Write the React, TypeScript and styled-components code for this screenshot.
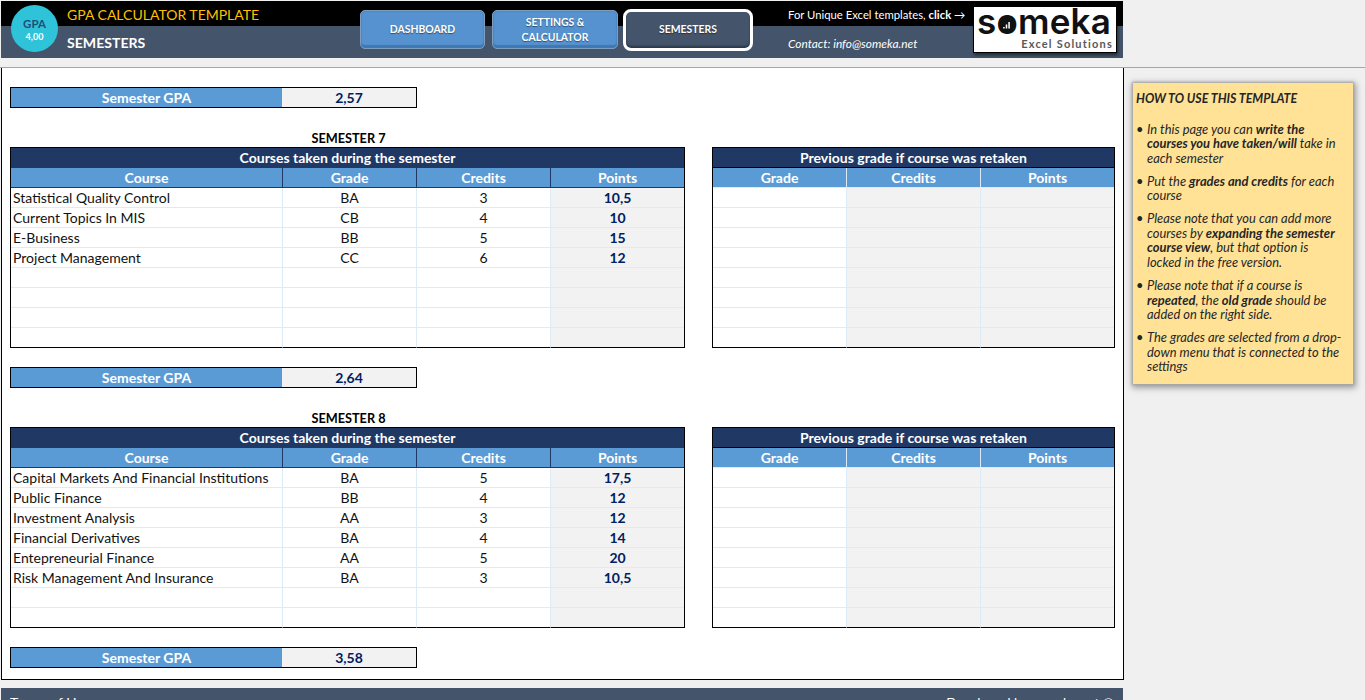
import React from "react";
import styled, { createGlobalStyle } from "styled-components";

const FONT = `Lato, "Open Sans", "Liberation Sans", sans-serif`;

const Global = createGlobalStyle`
  html, body { margin: 0; padding: 0; height: 700px; overflow: hidden; background: #f0f0f0; }
  * { box-sizing: border-box; }
  body { font-family: ${FONT}; color: #111; }
`;

const Page = styled.div`
  width: 1365px;
  height: 700px;
  overflow: hidden;
  padding-top: 1px;
`;

/* ---------- header ---------- */
const Header = styled.header`
  width: 1122px;
  height: 57px;
  margin-left: 1px;
  display: flex;
  background: linear-gradient(#000 0 25px, #44546a 25px 57px);
`;
const Badge = styled.div`
  width: 47px;
  height: 47px;
  margin: 4px 0 0 10px;
  padding-top: 2px;
  flex: none;
  border-radius: 50%;
  background: radial-gradient(circle, #2fc3d9 0 74%, #28a9bd 88%, #19788a 100%);
  display: flex;
  flex-direction: column;
  align-items: center;
  justify-content: center;
`;
const BadgeTitle = styled.span`
  font-size: 11.5px;
  font-weight: 700;
  line-height: 14px;
  color: #1f4e79;
`;
const BadgeValue = styled.span`
  font-size: 9px;
  font-weight: 700;
  line-height: 12px;
  color: #fff;
`;
const TitleBlock = styled.div`
  width: 293px;
  margin-left: 9px;
  flex: none;
  display: flex;
  flex-direction: column;
`;
const AppTitle = styled.div`
  height: 32px;
  padding-top: 4px;
  font-size: 14px;
  line-height: 19px;
  color: #ffc000;
`;
const PageTitle = styled.div`
  font-size: 14.1px;
  font-weight: 700;
  line-height: 19px;
  color: #fff;
`;
const Nav = styled.nav`
  width: 428px;
  flex: none;
  display: flex;
  align-items: center;
  gap: 7px;
`;
const NavButton = styled.div<{ $active?: boolean; $width: number }>`
  width: ${(p) => p.$width}px;
  height: ${(p) => (p.$active ? 42 : 39)}px;
  margin-left: ${(p) => (p.$active ? -2 : 0)}px;
  flex: none;
  display: flex;
  align-items: center;
  justify-content: center;
  text-align: center;
  border-radius: ${(p) => (p.$active ? 8 : 5)}px;
  border: ${(p) => (p.$active ? "3px solid #fff" : "1px solid #7f9dbd")};
  background: ${(p) => (p.$active ? "#44546a" : "#5692cf")};
  box-shadow: ${(p) =>
    p.$active
      ? "inset 0 -2px 2px #2c394b"
      : "inset 0 -3px 1px #3f78b2, inset 0 0 2px #3f78b2"};
  color: #fff;
  font-size: 10.4px;
  font-weight: 700;
  line-height: 15px;
  text-shadow: 0 1px 1px rgba(0, 0, 0, 0.45);
`;
const Contact = styled.div`
  width: 185px;
  flex: none;
  display: flex;
  flex-direction: column;
  justify-content: space-between;
  padding: 6px 0 7px;
  color: #fff;
  font-size: 11.3px;
  line-height: 15px;
`;
const ContactMail = styled.span`
  font-style: italic;
  font-size: 11.9px;
`;
const Logo = styled.div`
  position: relative;
  width: 144px;
  height: 47px;
  margin-top: 5px;
  flex: none;
  background: #fff;
  border: 1px solid #000;
  box-shadow: 1px 2px 3px rgba(0, 0, 0, 0.5);
`;
const LogoName = styled.div`
  height: 31px;
  padding-left: 3px;
  font-family: Inter, "Open Sans", sans-serif;
  font-size: 35px;
  font-weight: 600;
  line-height: 29px;
  letter-spacing: 0.2px;
  color: #111;
`;
const LogoMark = styled.svg`
  position: absolute;
  left: 22px;
  top: 7px;
  width: 21px;
  height: 21px;
`;
const LogoSub = styled.div`
  text-align: right;
  padding-right: 3px;
  font-size: 11px;
  font-weight: 700;
  line-height: 12px;
  letter-spacing: 1.2px;
  color: #595959;
`;

/* ---------- body ---------- */
const Body = styled.div`
  margin-top: 9px;
  border-top: 1px solid #a6a6a6;
  display: flex;
  align-items: flex-start;
`;
const Main = styled.main`
  width: 1123px;
  margin-left: 1px;
  flex: none;
  background: #fff;
  border-left: 1px solid #000;
  border-right: 1px solid #000;
  border-bottom: 1px solid #000;
  padding: 19px 0 11px 8px;
`;
const GpaBox = styled.div<{ $gap: number }>`
  width: 407px;
  height: 21px;
  margin-top: ${(p) => p.$gap}px;
  border: 1px solid #000;
  display: grid;
  grid-template-columns: 271px 1fr;
  grid-template-rows: 19px;
`;
const GpaLabel = styled.div`
  background: #5b9bd5;
  color: #fff;
  font-size: 14px;
  font-weight: 700;
  line-height: 20px;
  text-align: center;
`;
const GpaValue = styled.div`
  background: #f2f2f2;
  color: #002060;
  font-size: 14px;
  font-weight: 700;
  line-height: 20px;
  text-align: center;
`;
const SemesterTitle = styled.div`
  width: 675px;
  height: 19px;
  margin-top: 20px;
  padding-left: 2px;
  text-align: center;
  font-size: 12.7px;
  font-weight: 700;
  line-height: 21px;
  color: #000;
`;
const Tables = styled.div`
  display: flex;
  gap: 27px;
`;
const Table = styled.div<{ $width: number }>`
  width: ${(p) => p.$width}px;
  border: 1px solid #000;
  border-bottom: 0;
`;
const Banner = styled.div<{ $divider?: boolean }>`
  height: 20px;
  background: #1f3864;
  color: #fff;
  text-align: center;
  font-size: 14px;
  font-weight: 700;
  line-height: 20px;
  border-bottom: ${(p) => (p.$divider ? "1px solid #000" : "0")};
`;
const Row = styled.div<{ $cols: string }>`
  display: grid;
  grid-template-columns: ${(p) => p.$cols};
  grid-template-rows: 20px;
  height: 20px;
  &:last-child > * {
    border-bottom-color: #000;
  }
`;
const HeadCell = styled.div<{ $line: string; $last?: boolean }>`
  background: #5b9bd5;
  color: #fff;
  text-align: center;
  font-size: 14px;
  font-weight: 700;
  line-height: 20px;
  border-bottom: 1px solid ${(p) => p.$line};
  border-right: ${(p) => (p.$last ? "0" : `1px solid ${p.$line}`)};
`;
const Cell = styled.div<{ $left?: boolean; $shade?: boolean; $strong?: boolean; $last?: boolean }>`
  background: ${(p) => (p.$shade ? "#f2f2f2" : "#fff")};
  color: ${(p) => (p.$strong ? "#002060" : "#111")};
  font-weight: ${(p) => (p.$strong ? 700 : 400)};
  text-align: ${(p) => (p.$left ? "left" : "center")};
  padding-left: ${(p) => (p.$left ? 2 : 0)}px;
  font-size: 14px;
  line-height: 20px;
  white-space: nowrap;
  border-bottom: 1px solid #ddebf7;
  border-right: ${(p) => (p.$last ? "0" : "1px solid #ddebf7")};
`;

/* ---------- note ---------- */
const Aside = styled.aside`
  padding: 15px 0 0 9px;
`;
const Note = styled.div`
  width: 220px;
  height: 301px;
  background: #ffe296;
  padding: 9px 6px 0 3px;
  box-shadow: 0 0 2px 1px #a6a6a6, 1px 2px 6px 2px rgba(90, 90, 90, 0.55);
  font-size: 12.9px;
  font-style: italic;
  line-height: 14.5px;
  color: #262626;
`;
const NoteTitle = styled.div`
  font-weight: 700;
  font-size: 12.4px;
  margin-bottom: 15px;
`;
const NoteList = styled.ul`
  margin: 0;
  padding: 0 0 0 11px;
  list-style: none;
  white-space: nowrap;
`;
const NoteItem = styled.li`
  position: relative;
  margin-bottom: 8.7px;
  &::before {
    content: "•";
    position: absolute;
    left: -11px;
    font-style: normal;
  }
`;

/* ---------- footer ---------- */
const Footer = styled.footer`
  width: 1122px;
  height: 40px;
  margin: 8px 0 0 1px;
  padding: 6px 9px 0;
  background: #44546a;
  color: #fff;
  font-size: 14px;
  line-height: 18px;
  display: flex;
  justify-content: space-between;
`;
const FooterCredit = styled.span`
  font-size: 13.5px;
`;

const LEFT_COLS = "272px 134px 134px 133px";
const RIGHT_COLS = "134px 134px 133px";

type Course = [string, string, number, string];

const semesters: { title: string; gpa: string; courses: Course[] }[] = [
  {
    title: "SEMESTER 7",
    gpa: "2,64",
    courses: [
      ["Statistical Quality Control", "BA", 3, "10,5"],
      ["Current Topics In MIS", "CB", 4, "10"],
      ["E-Business", "BB", 5, "15"],
      ["Project Management", "CC", 6, "12"],
    ],
  },
  {
    title: "SEMESTER 8",
    gpa: "3,58",
    courses: [
      ["Capital Markets And Financial Institutions", "BA", 5, "17,5"],
      ["Public Finance", "BB", 4, "12"],
      ["Investment Analysis", "AA", 3, "12"],
      ["Financial Derivatives", "BA", 4, "14"],
      ["Entepreneurial Finance", "AA", 5, "20"],
      ["Risk Management And Insurance", "BA", 3, "10,5"],
    ],
  },
];

const ROWS = [0, 1, 2, 3, 4, 5, 6, 7];

function Gpa({ value, gap }: { value: string; gap: number }) {
  return (
    <GpaBox $gap={gap}>
      <GpaLabel>Semester GPA</GpaLabel>
      <GpaValue>{value}</GpaValue>
    </GpaBox>
  );
}

function Semester({ title, gpa, courses }: { title: string; gpa: string; courses: Course[] }) {
  return (
    <section>
      <SemesterTitle>{title}</SemesterTitle>
      <Tables>
        <Table $width={675}>
          <Banner>Courses taken during the semester</Banner>
          <Row $cols={LEFT_COLS}>
            <HeadCell $line="#1f3864">Course</HeadCell>
            <HeadCell $line="#1f3864">Grade</HeadCell>
            <HeadCell $line="#1f3864">Credits</HeadCell>
            <HeadCell $line="#1f3864" $last>Points</HeadCell>
          </Row>
          {ROWS.map((i) => {
            const c = courses[i];
            return (
              <Row $cols={LEFT_COLS} key={i}>
                <Cell $left>{c?.[0]}</Cell>
                <Cell>{c?.[1]}</Cell>
                <Cell>{c?.[2]}</Cell>
                <Cell $shade $strong $last>{c?.[3]}</Cell>
              </Row>
            );
          })}
        </Table>
        <Table $width={403}>
          <Banner $divider>Previous grade if course was retaken</Banner>
          <Row $cols={RIGHT_COLS}>
            <HeadCell $line="#ddebf7">Grade</HeadCell>
            <HeadCell $line="#ddebf7">Credits</HeadCell>
            <HeadCell $line="#ddebf7" $last>Points</HeadCell>
          </Row>
          {ROWS.map((i) => (
            <Row $cols={RIGHT_COLS} key={i}>
              <Cell />
              <Cell $shade />
              <Cell $shade $last />
            </Row>
          ))}
        </Table>
      </Tables>
      <Gpa value={gpa} gap={19} />
    </section>
  );
}

export default function App() {
  return (
    <Page>
      <Global />
      <Header>
        <Badge>
          <BadgeTitle>GPA</BadgeTitle>
          <BadgeValue>4,00</BadgeValue>
        </Badge>
        <TitleBlock>
          <AppTitle>GPA CALCULATOR TEMPLATE</AppTitle>
          <PageTitle>SEMESTERS</PageTitle>
        </TitleBlock>
        <Nav>
          <NavButton $width={125}>DASHBOARD</NavButton>
          <NavButton $width={126}>
            SETTINGS &amp;
            <br />
            CALCULATOR
          </NavButton>
          <NavButton $width={130} $active>SEMESTERS</NavButton>
        </Nav>
        <Contact>
          <span>
            For Unique Excel templates, <b>click</b> →
          </span>
          <ContactMail>Contact: info@someka.net</ContactMail>
        </Contact>
        <Logo>
          <LogoName>someka</LogoName>
          <LogoMark viewBox="0 0 22 22">
            <circle cx="11" cy="11" r="7" fill="#111" />
            <path d="M7.5 13.5h1.6v1.6H7.5zM10.2 11h1.6v4.1h-1.6zM12.9 8.5h1.6v6.6h-1.6z" fill="#fff" />
          </LogoMark>
          <LogoSub>Excel Solutions</LogoSub>
        </Logo>
      </Header>
      <Body>
        <Main>
          <Gpa value="2,57" gap={0} />
          {semesters.map((s) => (
            <Semester key={s.title} {...s} />
          ))}
        </Main>
        <Aside>
          <Note>
            <NoteTitle>HOW TO USE THIS TEMPLATE</NoteTitle>
            <NoteList>
              <NoteItem>
                In this page you can <b>write the</b>
                <br />
                <b>courses you have taken/will</b> take in
                <br />
                each semester
              </NoteItem>
              <NoteItem>
                Put the <b>grades and credits</b> for each
                <br />
                course
              </NoteItem>
              <NoteItem>
                Please note that you can add more
                <br />
                courses by <b>expanding the semester</b>
                <br />
                <b>course view</b>, but that option is
                <br />
                locked in the free version.
              </NoteItem>
              <NoteItem>
                Please note that if a course is
                <br />
                <b>repeated</b>, the <b>old grade</b> should be
                <br />
                added on the right side.
              </NoteItem>
              <NoteItem>
                The grades are selected from a drop-
                <br />
                down menu that is connected to the
                <br />
                settings
              </NoteItem>
            </NoteList>
          </Note>
        </Aside>
      </Body>
      <Footer>
        <span>Terms of Use</span>
        <FooterCredit>Developed by someka.net ©</FooterCredit>
      </Footer>
    </Page>
  );
}
